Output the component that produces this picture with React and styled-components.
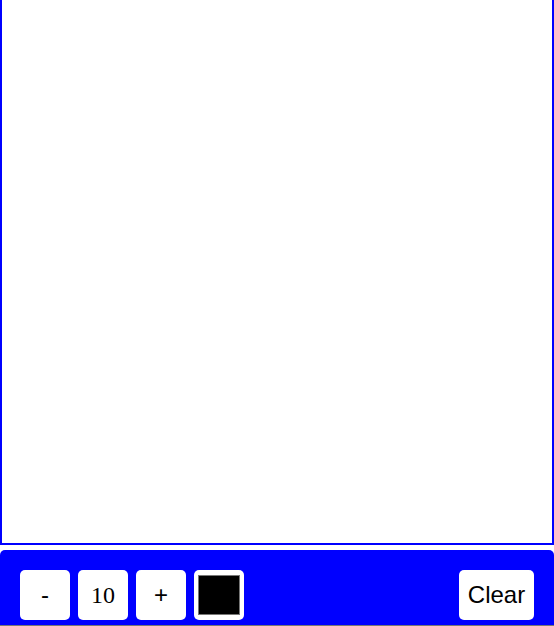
import React, { useEffect, useRef, useState } from 'react';
import styled, { createGlobalStyle } from 'styled-components';

const GlobalStyle = createGlobalStyle`
  * {
    box-sizing: border-box;
  }
  body {
    margin: 0;
    background-color: #fff;
    font-family: "Liberation Serif", "Times New Roman", serif;
  }
`;

const Page = styled.main`
  display: flex;
  flex-direction: column;
  gap: 5px;
  height: 100vh;
`;

const Canvas = styled.canvas`
  display: block;
  flex: 1;
  width: 100%;
  min-height: 0;
  border: 2px solid blue;
  border-top: none;
`;

const Toolbox = styled.div`
  display: flex;
  gap: 8px;
  padding: 20px 20px 5px;
  background-color: blue;
  border-radius: 5px 5px 0 0;
  border-bottom: 1px solid #777;
`;

const Button = styled.button`
  min-width: ${({ $wide }) => ($wide ? '75px' : '50px')};
  height: 50px;
  margin-left: ${({ $wide }) => ($wide ? 'auto' : '0')};
  padding: 5px;
  border: none;
  border-radius: 5px;
  background-color: #fff;
  color: #000;
  font-family: "Liberation Sans", Arial, sans-serif;
  font-size: 24px;
  cursor: pointer;
`;

const Size = styled.output`
  display: flex;
  align-items: center;
  justify-content: center;
  width: 50px;
  height: 50px;
  border-radius: 5px;
  background-color: #fff;
  font-size: 24px;
`;

const ColorInput = styled.input`
  width: 50px;
  height: 50px;
  padding: 1px 2px;
  border: none;
  border-radius: 5px;
  background-color: #fff;
  cursor: pointer;
`;

function App() {
  const canvasRef = useRef(null);
  const lastPoint = useRef(null);
  const [size, setSize] = useState(10);
  const [color, setColor] = useState('#000000');

  useEffect(() => {
    const canvas = canvasRef.current;
    canvas.width = canvas.clientWidth;
    canvas.height = canvas.clientHeight;
  }, []);

  const startDrawing = (e) => {
    lastPoint.current = { x: e.nativeEvent.offsetX, y: e.nativeEvent.offsetY };
  };

  const draw = (e) => {
    if (!lastPoint.current) return;
    const { offsetX: x, offsetY: y } = e.nativeEvent;
    const ctx = canvasRef.current.getContext('2d');
    ctx.strokeStyle = color;
    ctx.lineWidth = size * 2;
    ctx.lineCap = 'round';
    ctx.beginPath();
    ctx.moveTo(lastPoint.current.x, lastPoint.current.y);
    ctx.lineTo(x, y);
    ctx.stroke();
    lastPoint.current = { x, y };
  };

  const stopDrawing = () => {
    lastPoint.current = null;
  };

  const clear = () => {
    const canvas = canvasRef.current;
    canvas.getContext('2d').clearRect(0, 0, canvas.width, canvas.height);
  };

  return (
    <>
      <GlobalStyle />
      <Page>
        <Canvas
          ref={canvasRef}
          onMouseDown={startDrawing}
          onMouseMove={draw}
          onMouseUp={stopDrawing}
          onMouseLeave={stopDrawing}
        />
        <Toolbox>
          <Button onClick={() => setSize(Math.max(5, size - 5))}>-</Button>
          <Size>{size}</Size>
          <Button onClick={() => setSize(Math.min(50, size + 5))}>+</Button>
          <ColorInput
            type="color"
            aria-label="Color"
            value={color}
            onChange={(e) => setColor(e.target.value)}
          />
          <Button $wide onClick={clear}>Clear</Button>
        </Toolbox>
      </Page>
    </>
  );
}

export default App;
